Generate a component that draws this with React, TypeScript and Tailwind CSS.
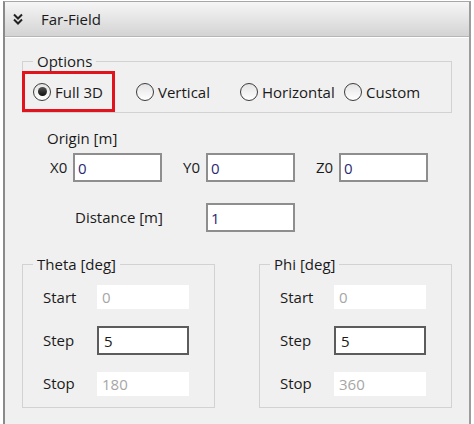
import React from "react";

const font = { fontFamily: '"Open Sans", "Noto Sans", sans-serif' };

function Radio({ label, checked = false }: { label: string; checked?: boolean }) {
  return (
    <div className="flex items-center gap-[4px]">
      <div className="w-[18px] h-[18px] rounded-full border-[1.5px] border-[#3c3c3c] bg-gradient-to-b from-[#e4e4e4] to-white flex items-center justify-center">
        {checked && <div className="w-[9px] h-[9px] rounded-full bg-gradient-to-b from-[#555] to-[#111]" />}
      </div>
      <span className="text-[15px] leading-[20px] text-[#1a1a1a]">{label}</span>
    </div>
  );
}

function Field({
  value,
  width = "w-[89px]",
  variant = "normal",
}: {
  value: string;
  width?: string;
  variant?: "normal" | "strong" | "disabled";
}) {
  if (variant === "disabled") {
    return (
      <input
        readOnly
        disabled
        value={value}
        className="w-[92px] h-[24px] bg-white px-[5px] text-[15px] text-[#a6a6a6] outline-none"
      />
    );
  }
  return (
    <input
      readOnly
      value={value}
      className={
        variant === "strong"
          ? "w-[92px] h-[29px] bg-white border-2 border-[#5c5c5c] px-[5px] text-[15px] text-[#1a1a1a] outline-none"
          : `${width} h-[29px] bg-white border-2 border-[#8e8e8e] px-[3px] text-[15px] text-[#2b2a72] outline-none`
      }
    />
  );
}

function AngleGroup({ title, stop }: { title: string; stop: string }) {
  return (
    <fieldset className="w-[193px] border border-[#d2d2d2]">
      <legend className="ml-[10px] px-[4px] text-[15px] leading-[20px] text-[#1a1a1a]">{title}</legend>
      <div className="pl-[20px] pt-[11px] pb-[11px]">
        <div className="flex items-center h-[24px]">
          <span className="w-[54px] text-[15px] text-[#1a1a1a]">Start</span>
          <Field value="0" variant="disabled" />
        </div>
        <div className="flex items-center h-[29px] mt-[17px]">
          <span className="w-[54px] text-[15px] text-[#1a1a1a]">Step</span>
          <Field value="5" variant="strong" />
        </div>
        <div className="flex items-center h-[25px] mt-[16px]">
          <span className="w-[54px] text-[15px] text-[#1a1a1a]">Stop</span>
          <Field value={stop} variant="disabled" />
        </div>
      </div>
    </fieldset>
  );
}

export default function App() {
  return (
    <div className="w-[474px] h-[424px] overflow-hidden bg-white pt-[1px]" style={font}>
      <div className="ml-[3px] w-[468px] h-[440px] border-t border-t-[#a8a8a8] border-l-2 border-l-[#8a8a8a] border-r-2 border-r-[#9c9c9c] bg-[#f0f0f0]">
        {/* header */}
        <div className="h-[35px] flex items-center pl-[8px] bg-gradient-to-b from-[#f6f6f6] to-[#d3d3d3] border-b border-b-[#b6b6b6]">
          <svg width="10" height="13" viewBox="0 0 10 13" fill="none" stroke="#222" strokeWidth="2">
            <path d="M1 1.5 L5 5.5 L9 1.5" />
            <path d="M1 6.5 L5 10.5 L9 6.5" />
          </svg>
          <span className="ml-[18px] text-[15px] leading-[20px] text-[#1a1a1a]">Far-Field</span>
        </div>

        <div className="border-t border-t-white pt-[13px]">
          {/* options */}
          <fieldset className="ml-[17px] w-[430px] border border-[#d2d2d2]">
            <legend className="ml-[10px] px-[4px] text-[15px] leading-[20px] text-[#1a1a1a]">Options</legend>
            <div className="flex items-center h-[41px]">
              <div className="-ml-[1px] h-[41px] w-[93px] border-[3px] border-[#e1141d] flex items-center pl-[8px]">
                <Radio label="Full 3D" checked />
              </div>
              <div className="ml-[21px] w-[104px]">
                <Radio label="Vertical" />
              </div>
              <div className="w-[104px]">
                <Radio label="Horizontal" />
              </div>
              <Radio label="Custom" />
            </div>
          </fieldset>

          {/* origin */}
          <div className="mt-[15px] ml-[42px] text-[15px] leading-[20px] text-[#1a1a1a]">Origin [m]</div>
          <div className="mt-[5px] ml-[45px] flex gap-[21px]">
            {["X0", "Y0", "Z0"].map((axis) => (
              <div key={axis} className="flex items-center gap-[5px]">
                <span className="w-[18px] text-[15px] text-[#1a1a1a]">{axis}</span>
                <Field value="0" />
              </div>
            ))}
          </div>
          <div className="mt-[21px] ml-[70px] flex items-center">
            <span className="w-[131px] text-[15px] text-[#1a1a1a]">Distance [m]</span>
            <Field value="1" />
          </div>

          {/* angles */}
          <div className="mt-[22px] ml-[17px] flex gap-[44px]">
            <AngleGroup title="Theta [deg]" stop="180" />
            <AngleGroup title="Phi [deg]" stop="360" />
          </div>
        </div>
      </div>
    </div>
  );
}
